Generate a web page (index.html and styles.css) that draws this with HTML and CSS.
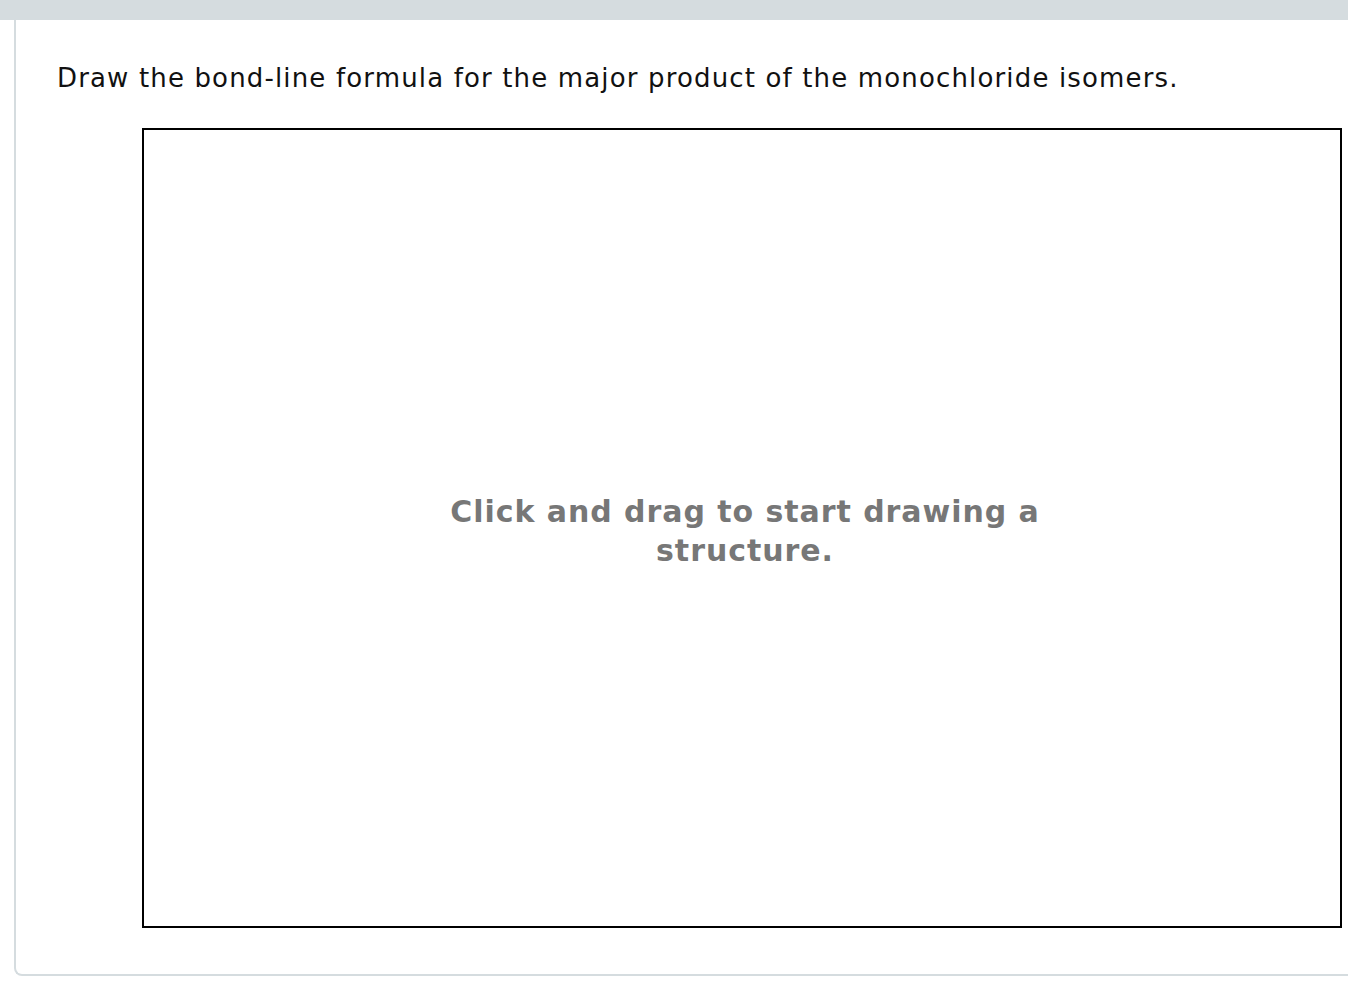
FILE: index.html
```html
<!DOCTYPE html>
<html>
<head>
<meta charset="utf-8">
<link rel="stylesheet" href="styles.css">
</head>
<body>
<div class="topbar"></div>
<div class="card">
  <p class="prompt">Draw the bond-line formula for the major product of the monochloride isomers.</p>
  <div class="canvas">
    <div class="hint">Click and drag to start drawing a structure.</div>
  </div>
</div>
</body>
</html>
```
FILE: styles.css
```css
html, body {
  margin: 0;
  padding: 0;
  background: #fff;
}
body {
  font-family: Verdana, "DejaVu Sans", sans-serif;
  color: #111;
}
.topbar {
  height: 20px;
  background: #d5dcdf;
}
.card {
  margin-left: 14px;
  border-left: 2px solid #d5dcdf;
  border-bottom: 2px solid #d5dcdf;
  border-bottom-left-radius: 8px;
  box-sizing: border-box;
  height: 956px;
  padding-top: 43px;
}
.prompt {
  margin: 0 0 0 41px;
  font-size: 26px;
  line-height: 30px;
  letter-spacing: 1.15px;
}
.canvas {
  margin: 35px 0 0 126px;
  width: 1200px;
  height: 800px;
  box-sizing: border-box;
  border: 2px solid #000;
  display: flex;
  align-items: center;
  justify-content: center;
}
.hint {
  width: 640px;
  padding-top: 5px;
  padding-left: 6px;
  box-sizing: border-box;
  text-align: center;
  font-weight: bold;
  font-size: 30px;
  line-height: 39px;
  letter-spacing: 0.95px;
  color: #777;
}
```
